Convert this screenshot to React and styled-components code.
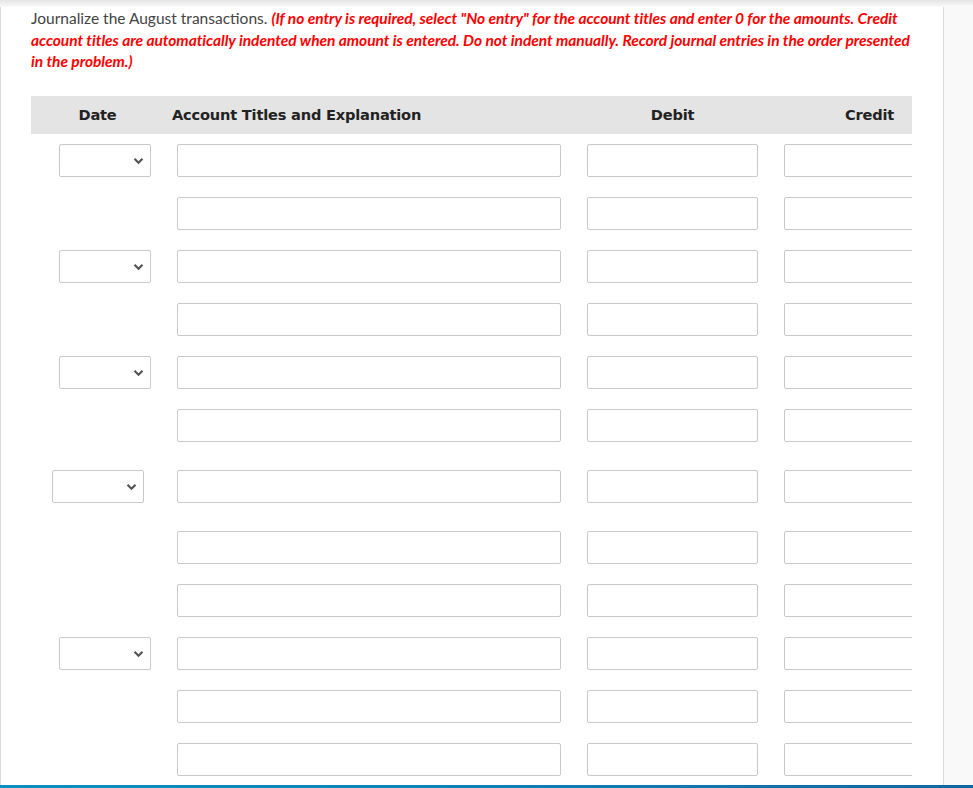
import React from "react";
import styled, { createGlobalStyle } from "styled-components";

const GlobalStyle = createGlobalStyle`
  html, body {
    margin: 0;
    padding: 0;
    background: #fff;
  }
  * {
    box-sizing: border-box;
  }
`;

const Page = styled.div`
  height: 100vh;
  display: flex;
  flex-direction: column;
  overflow: hidden;
`;

const TopShade = styled.div`
  height: 7px;
  flex-shrink: 0;
  background: linear-gradient(to bottom, #e4e4e4, #f4f4f4 70%, #fbfbfb);
`;

const Body = styled.div`
  flex: 1;
  display: flex;
  min-height: 0;
`;

const Main = styled.main`
  width: 943px;
  flex-shrink: 0;
  border-left: 1px solid #d9d9d9;
  padding: 1px 0 0 30px;
  overflow: hidden;
`;

const Side = styled.aside`
  flex: 1;
  border-left: 1px solid #dcdcdc;
  background: #f9f9f9;
`;

const Footer = styled.div`
  height: 3px;
  flex-shrink: 0;
  background: linear-gradient(to right, #0b90c4, #0c7db6 60%, #0d69a3);
`;

const Instructions = styled.p`
  margin: 0;
  width: 886px;
  font-family: Lato, "Open Sans", sans-serif;
  font-size: 15.5px;
  line-height: 21.5px;
  color: #444;
`;

const Warning = styled.em`
  color: #f00;
  font-weight: 700;
  font-style: italic;
  letter-spacing: -0.03px;
`;

const Table = styled.div`
  margin-top: 23px;
  width: 881px;
  overflow: hidden;
`;

const Grid = styled.div`
  display: grid;
  grid-template-columns: 133px 410px 197px 197px;
  width: 937px;
`;

const HeadCell = styled.div`
  height: 38px;
  background: #e4e4e4;
  display: flex;
  align-items: center;
  justify-content: ${(p) => p.$align || "center"};
  padding: ${(p) => (p.$align === "flex-start" ? "0 8px" : "0")};
  font-family: "DejaVu Sans", Verdana, sans-serif;
  font-weight: 700;
  font-size: 14.6px;
  color: #222;
  letter-spacing: -0.2px;
`;

const Cell = styled.div`
  padding: ${(p) => (p.$loose ? "18px" : "10px")} 13px;
  display: flex;
  align-items: center;
`;

const DateCell = styled(Cell)`
  padding-left: ${(p) => (p.$shift ? "21px" : "28px")};
`;

const Field = styled.input`
  width: 100%;
  height: 33px;
  border: 1px solid #c9c9c9;
  border-radius: 2px;
  background: #fff;
  outline: none;
  font-size: 14px;
`;

const SelectBox = styled.div`
  position: relative;
  width: 92px;
  height: 33px;
  border: 1px solid #c9c9c9;
  border-radius: 2px;
  background: #fff;
`;

const Chevron = styled.svg`
  position: absolute;
  right: 6px;
  top: 12px;
  width: 11px;
  height: 8px;
`;

const DateSelect = () => (
  <SelectBox>
    <Chevron viewBox="0 0 11 8">
      <path d="M1.5 1.8 L5.5 5.8 L9.5 1.8" fill="none" stroke="#555" strokeWidth="2.2" />
    </Chevron>
  </SelectBox>
);

const rows = [
  { date: true },
  {},
  { date: true },
  {},
  { date: true },
  {},
  { date: true, loose: true, shift: true },
  {},
  {},
  { date: true },
  {},
  {},
];

export default function App() {
  return (
    <>
      <GlobalStyle />
      <Page>
        <TopShade />
        <Body>
          <Main>
            <Instructions>
              Journalize the August transactions.{" "}
              <Warning>
                (If no entry is required, select "No entry" for the account titles and enter 0 for the
                amounts. Credit account titles are automatically indented when amount is entered. Do not
                indent manually. Record journal entries in the order presented in the problem.)
              </Warning>
            </Instructions>
            <Table>
              <Grid>
                <HeadCell>Date</HeadCell>
                <HeadCell $align="flex-start">Account Titles and Explanation</HeadCell>
                <HeadCell>Debit</HeadCell>
                <HeadCell>Credit</HeadCell>
                {rows.map((r, i) => (
                  <React.Fragment key={i}>
                    <DateCell $loose={r.loose} $shift={r.shift}>
                      {r.date && <DateSelect />}
                    </DateCell>
                    <Cell $loose={r.loose}>
                      <Field />
                    </Cell>
                    <Cell $loose={r.loose}>
                      <Field />
                    </Cell>
                    <Cell $loose={r.loose}>
                      <Field />
                    </Cell>
                  </React.Fragment>
                ))}
              </Grid>
            </Table>
          </Main>
          <Side />
        </Body>
        <Footer />
      </Page>
    </>
  );
}
